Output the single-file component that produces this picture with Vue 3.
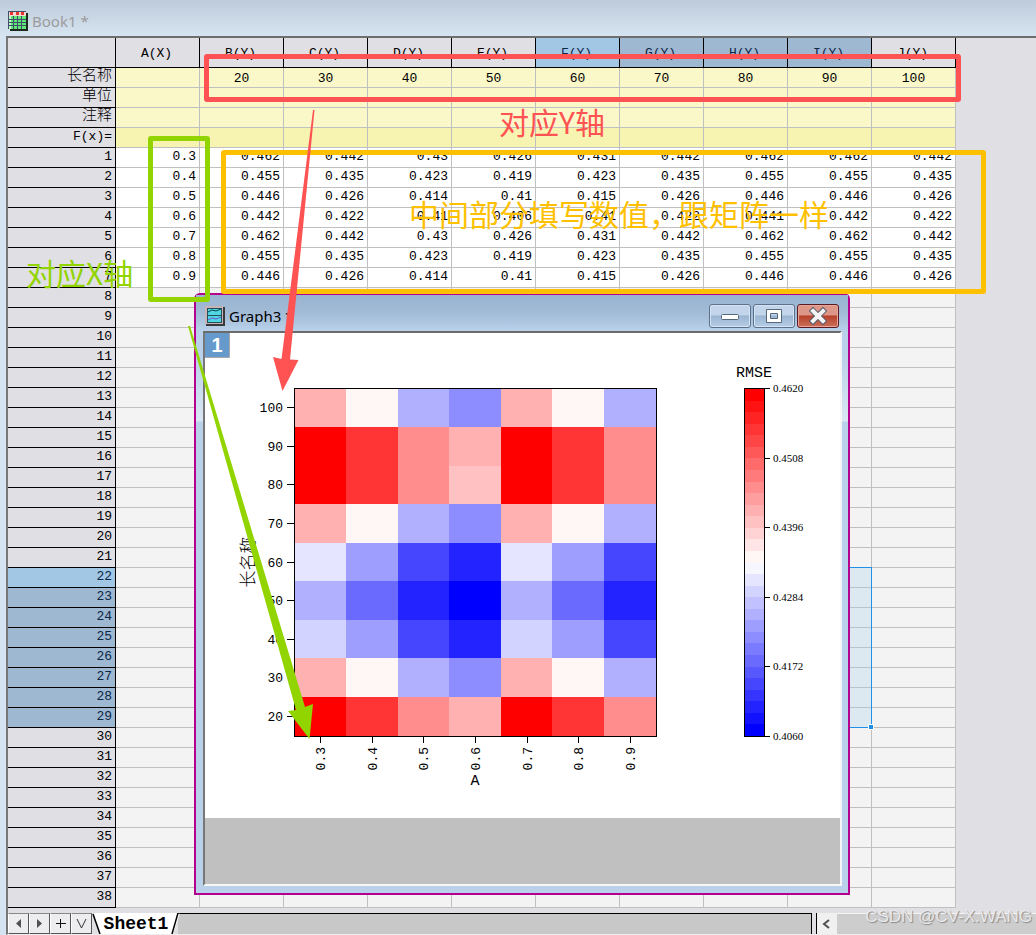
<script setup>
const columns = ['A(X)', 'B(Y)', 'C(Y)', 'D(Y)', 'E(Y)', 'F(Y)', 'G(Y)', 'H(Y)', 'I(Y)', 'J(Y)']
const columnState = ['', '', '', '', '', 'active', 'picked', 'picked', 'picked', '']
const longNames = ['', 20, 30, 40, 50, 60, 70, 80, 90, 100]
const data = [
  [0.3, 0.462, 0.442, 0.43, 0.426, 0.431, 0.442, 0.462, 0.462, 0.442],
  [0.4, 0.455, 0.435, 0.423, 0.419, 0.423, 0.435, 0.455, 0.455, 0.435],
  [0.5, 0.446, 0.426, 0.414, 0.41, 0.415, 0.426, 0.446, 0.446, 0.426],
  [0.6, 0.442, 0.422, 0.41, 0.406, 0.41, 0.422, 0.441, 0.442, 0.422],
  [0.7, 0.462, 0.442, 0.43, 0.426, 0.431, 0.442, 0.462, 0.462, 0.442],
  [0.8, 0.455, 0.435, 0.423, 0.419, 0.423, 0.435, 0.455, 0.455, 0.435],
  [0.9, 0.446, 0.426, 0.414, 0.41, 0.415, 0.426, 0.446, 0.446, 0.426]
]
const infoRows = ['单位', '注释', 'F(x)=']
const rowCount = 38

const rowState = (n) => (n === 22 ? 'active' : n > 22 && n < 30 ? 'picked' : '')

const LEVELS = 30
const MIN = 0.406
const MAX = 0.462

function levelColor(i) {
  if (i >= LEVELS / 2) {
    const v = Math.round((255 * (LEVELS - 1 - i)) / 14.5)
    return `rgb(255,${v},${v})`
  }
  const v = Math.round((255 * i) / 14.5)
  return `rgb(${v},${v},255)`
}

function valueColor(v) {
  const i = Math.floor(((v - MIN) / (MAX - MIN)) * LEVELS + 0.001)
  return levelColor(Math.min(LEVELS - 1, Math.max(0, i)))
}

const plot = { x: 90, y: 56, w: 361, h: 347 }
const edgeX = (i) => Math.floor(plot.x + (plot.w * i) / 7)
const edgeY = (j) => Math.floor(plot.y + (plot.h * j) / 9)

const cells = []
data.forEach((row, i) => {
  for (let k = 1; k <= 9; k++) {
    const j = 9 - k
    cells.push({
      key: `${i}-${k}`,
      x: edgeX(i),
      y: edgeY(j),
      w: edgeX(i + 1) - edgeX(i),
      h: edgeY(j + 1) - edgeY(j),
      fill: valueColor(row[k])
    })
  }
})
const yTicks = Array.from({ length: 9 }, (_, j) => ({
  label: 100 - j * 10,
  y: Math.round(plot.y + (plot.h * (2 * j + 1)) / 18) - 1
}))
const xTicks = data.map((row, i) => ({
  label: row[0],
  x: Math.floor(plot.x + (plot.w * (2 * i + 1)) / 14)
}))
const barEdge = (i) => Math.round(56 + (347 * i) / LEVELS)
const bar = Array.from({ length: LEVELS }, (_, i) => ({
  y: barEdge(i),
  h: barEdge(i + 1) - barEdge(i),
  fill: levelColor(LEVELS - 1 - i)
}))
const barTicks = ['0.4620', '0.4508', '0.4396', '0.4284', '0.4172', '0.4060'].map((label, i) => ({
  label,
  y: Math.round(55 + (348 * i) / 5)
}))
</script>

<template>
  <main class="book">
    <header class="book-title">
      <svg class="book-icon" width="20" height="20" viewBox="0 0 20 20" aria-hidden="true">
        <path d="M2 2h18v18H2z" fill="#1c2a1c" />
        <path d="M0 0h18v18H0z" fill="#3f4f6a" />
        <path d="M1 1h17v4H1z" fill="#f6d6d0" />
        <path d="M2 1h3v3H2zM8 1h3v3H8zM13 1h3v3h-3z" fill="#e8342c" />
        <path
          d="M1 5h4v3H1zM6 5h3v3H6zM10 5h3v3h-3zM14 5h4v3h-4zM1 9h4v2H1zM6 9h3v2H6zM10 9h3v2h-3zM14 9h4v2h-4zM1 12h4v2H1zM6 12h3v2H6zM10 12h3v2h-3zM14 12h4v2h-4zM1 15h4v3H1zM6 15h3v3H6zM10 15h3v3h-3zM14 15h4v3h-4z"
          fill="#5fe878"
        />
        <path d="M1 5h2v3H1zM1 9h2v2H1zM1 12h2v2H1zM1 15h2v3H1z" fill="#c4f5ca" />
      </svg>
      <span>Book1 *</span>
    </header>

    <section class="sheet-area">
      <table class="sheet">
        <colgroup>
          <col class="col-head" />
          <col v-for="c in columns" :key="c" class="col-data" />
        </colgroup>
        <thead>
          <tr>
            <th></th>
            <th v-for="(c, i) in columns" :key="c" scope="col" :class="columnState[i]">{{ c }}</th>
          </tr>
        </thead>
        <tbody>
          <tr class="info names">
            <th scope="row">长名称</th>
            <td v-for="(n, i) in longNames" :key="i">{{ n }}</td>
          </tr>
          <tr v-for="label in infoRows" :key="label" class="info" :class="{ formula: label === 'F(x)=' }">
            <th scope="row">{{ label }}</th>
            <td v-for="c in columns" :key="c"></td>
          </tr>
          <tr v-for="n in rowCount" :key="n" :class="{ blank: n > data.length }">
            <th scope="row" :class="rowState(n)">{{ n }}</th>
            <td v-for="(c, i) in columns" :key="c">{{ n <= data.length ? data[n - 1][i] : '' }}</td>
          </tr>
        </tbody>
      </table>
      <div class="selection"><i></i></div>
    </section>

    <footer class="tabs">
      <button type="button" class="nav" aria-label="Previous sheet">
        <svg width="20" height="20" viewBox="0 0 20 20"><path d="M12 5v9l-5-4.500z" fill="#505050" /></svg>
      </button>
      <button type="button" class="nav" aria-label="Next sheet">
        <svg width="20" height="20" viewBox="0 0 20 20"><path d="M7 5v9l5-4.500z" fill="#505050" /></svg>
      </button>
      <button type="button" class="nav" aria-label="Add sheet">
        <svg width="20" height="20" viewBox="0 0 20 20"><path d="M5 9.500h10M9.500 5v9" stroke="#111" fill="none" /></svg>
      </button>
      <button type="button" class="nav" aria-label="Sheet list">
        <svg width="20" height="20" viewBox="0 0 20 20"><path d="M5 5l4.500 9L14 5" stroke="#333" fill="none" /></svg>
      </button>
      <button type="button" class="tab">
        <svg width="88" height="21" viewBox="0 0 88 21" aria-hidden="true">
          <path d="M1 0h87l-7 21H8z" fill="#fff" />
          <path d="M1 1l7 20M88 0h-2l-6 21" stroke="#000" stroke-width="1.500" fill="none" />
        </svg>
        <span>Sheet1</span>
      </button>
      <div class="strip"></div>
      <button type="button" class="scroll-left" aria-label="Scroll left">
        <svg width="20" height="20" viewBox="0 0 20 20"><path d="M12 6l-5 4 5 4" stroke="#505050" stroke-width="2" fill="none" /></svg>
      </button>
      <div class="scroll-track"></div>
    </footer>

    <section class="graph">
      <header class="graph-title">
        <svg width="20" height="20" viewBox="0 0 20 20" aria-hidden="true">
          <path d="M1 1h19v19H1z" fill="#3a3a3a" />
          <path d="M0 0h18v18H0z" fill="#c8b4b4" />
          <path d="M2 2h15v15H2z" fill="#23505c" />
          <path d="M3 3h13v6H3zM3 10h13v6H3z" fill="#4fd6e0" />
          <path d="M3 6l4-2 4 1 5-2" stroke="#0d4250" fill="none" />
          <path d="M3 14l4-2 4 1 5-2" stroke="#6a57d8" fill="none" />
        </svg>
        <span class="graph-name">Graph3 *</span>
        <button type="button" class="win" aria-label="Minimize">
          <svg width="40" height="22" viewBox="0 0 40 22"><rect x="11.500" y="9.500" width="17" height="5" rx="1" fill="#fff" stroke="#57677a" /></svg>
        </button>
        <button type="button" class="win" aria-label="Maximize">
          <svg width="40" height="22" viewBox="0 0 40 22">
            <path d="M12.500 4.500h15v13h-15zM16.500 8.500v5h7v-5z" fill="#fff" fill-rule="evenodd" stroke="#57677a" />
          </svg>
        </button>
        <button type="button" class="win close" aria-label="Close">
          <svg width="40" height="22" viewBox="0 0 40 22">
            <path d="M15 6l10 10M25 6L15 16" stroke="#57596c" stroke-width="6" stroke-linecap="square" />
            <path d="M15 6l10 10M25 6L15 16" stroke="#f4f4f4" stroke-width="4" stroke-linecap="square" />
          </svg>
        </button>
      </header>
      <div class="graph-body">
        <svg class="chart" width="635" height="485" viewBox="0 0 635 485" role="img" aria-label="RMSE">
          <rect x="0" y="0" width="24" height="24" fill="#6699cc" />
          <path d="M0 24.500h24.500V0" stroke="#a8a8a8" fill="none" />
          <text x="12" y="19" class="layer">1</text>

          <g shape-rendering="crispEdges">
            <rect v-for="c in cells" :key="c.key" :x="c.x" :y="c.y" :width="c.w" :height="c.h" :fill="c.fill" />
            <rect x="89.500" y="55.500" width="362" height="348" fill="none" stroke="#000" />
            <path v-for="t in yTicks" :key="t.label" :d="`M82 ${t.y + 0.5}h7`" stroke="#000" />
            <path v-for="t in xTicks" :key="t.label" :d="`M${t.x + 0.5} 404v6`" stroke="#000" />
            <rect v-for="b in bar" :key="b.y" x="540" :y="b.y" width="20" :height="b.h" :fill="b.fill" />
            <rect x="539.500" y="55.500" width="20" height="348" fill="none" stroke="#000" />
            <path v-for="t in barTicks" :key="t.label" :d="`M560 ${t.y + 0.5}h5`" stroke="#000" />
          </g>

          <text v-for="t in yTicks" :key="t.label" x="78" :y="t.y + 5" class="tick end">{{ t.label }}</text>
          <text
            v-for="t in xTicks"
            :key="t.label"
            class="tick end"
            :transform="`translate(${t.x + 5} 414) rotate(-90)`"
          >{{ t.label }}</text>
          <text x="270" y="452" class="axis">A</text>
          <text class="axis cjk" transform="translate(49 229) rotate(-90)">长名称</text>
          <text x="549" y="44" class="axis">RMSE</text>
          <text v-for="t in barTicks" :key="t.label" x="568" :y="t.y + 4" class="small">{{ t.label }}</text>
        </svg>
      </div>
    </section>

    <div class="mark mark-y"></div>
    <div class="mark mark-x"></div>
    <div class="mark mark-z"></div>
    <p class="note note-y">对应Y轴</p>
    <p class="note note-x">对应X轴</p>
    <p class="note note-z">中间部分填写数值，跟矩阵一样</p>
    <svg class="arrows" width="400" height="760" viewBox="0 0 400 760" aria-hidden="true">
      <path d="M313 110h1.500L290 359.500l8.500.5-16 31-9.500-34 8.500 2z" fill="#ff5252" />
      <path d="M188 326h2L305 707l8-3-3.500 35L288 711l8-1z" fill="#92d400" />
    </svg>
    <p class="credit">CSDN @CV-X.WANG</p>
  </main>
</template>

<style>
body {
  margin: 0;
}
</style>

<style scoped>
.book {
  position: relative;
  display: flex;
  flex-direction: column;
  min-height: 100vh;
  box-sizing: border-box;
  padding-left: 6px;
  overflow: hidden;
  background: #d6e3f0;
  font-family: "Liberation Mono", "Noto Sans CJK SC", monospace;
  font-size: 13px;
  color: #000;
}
.book-title {
  display: flex;
  align-items: center;
  gap: 4px;
  height: 36px;
  box-sizing: border-box;
  padding: 6px 2px 0;
  margin-left: -6px;
  padding-left: 8px;
  background: linear-gradient(#becbda, #d6e4f1);
  font: 15px "Noto Sans", "Open Sans", sans-serif;
  color: #9c9c9c;
}
.book-icon {
  flex: none;
}
.sheet-area {
  position: relative;
  flex: 1;
  border-top: 2px solid #6e6e6e;
  border-left: 2px solid #777;
  padding-bottom: 5px;
  background: #e0dfe4;
}
.sheet {
  table-layout: fixed;
  width: 948px;
  border-collapse: separate;
  border-spacing: 0;
}
.col-head {
  width: 108px;
}
.col-data {
  width: 84px;
}
.sheet th,
.sheet td {
  box-sizing: border-box;
  height: 20px;
  padding: 0 3px 2px;
  line-height: 17px;
  font-weight: 400;
  text-align: right;
  vertical-align: middle;
  white-space: nowrap;
  border-right: 1px solid #c0c0c0;
  border-bottom: 1px solid #c0c0c0;
  background: #fff;
}
.sheet th {
  border-color: #000;
  background: #e0dfe4;
}
.sheet .info th {
  font-size: 15px;
  font-weight: 300;
  line-height: 16px;
}
.sheet .formula th {
  font-size: 13px;
}
.sheet thead th {
  height: 30px;
  padding: 1px 2px 0 0;
  text-align: center;
}
.sheet .info td {
  background: #faf8c8;
}
.sheet .formula td {
  background: #f6f4b0;
}
.sheet .names td {
  padding: 1px 0 0;
  text-align: center;
}
.sheet .blank td {
  background: #f3f3f3;
}
.sheet th.active {
  background: #a2c7e5;
  color: #0b2746;
}
.sheet th.picked {
  background: #9fb8d2;
  color: #0b2746;
}
.selection {
  position: absolute;
  left: 527px;
  top: 529px;
  width: 335px;
  height: 159px;
  border: 1px solid #2090e8;
  background: rgba(160, 210, 235, 0.28);
  background-clip: padding-box;
}
.selection i {
  position: absolute;
  right: -3px;
  bottom: -3px;
  width: 4px;
  height: 4px;
  border: 1px solid #fff;
  background: #2090e8;
}
.tabs {
  display: flex;
  height: 22px;
  box-sizing: border-box;
  border-left: 2px solid #777;
  border-bottom: 1px solid #eee;
  background: #e0dfe4;
}
.tabs button {
  flex: none;
  padding: 0;
  border: 0;
  font-family: inherit;
}
.tabs .nav {
  width: 21px;
  border: 1px solid #555;
  border-left-color: #fff;
  border-top-color: #888;
  background: #ededf0;
}
.nav svg,
.scroll-left svg,
.win svg {
  display: block;
}
.tabs .tab {
  display: grid;
  margin-right: -2px;
  z-index: 1;
  background: none;
}
.tab svg,
.tab span {
  grid-area: 1 / 1;
}
.tab span {
  place-self: center;
  font-size: 18px;
  line-height: 20px;
  font-weight: 700;
}
.tab svg {
  display: block;
}
.strip {
  flex: 1;
  border-top: 1px solid #000;
  border-right: 1px solid #000;
  background: #c8c8c8;
}
.tabs .scroll-left {
  width: 21px;
  margin-left: 4px;
  border-left: 1px solid #000;
  background: #f0f0f0;
}
.scroll-track {
  width: 199px;
  border-top: 1px solid #f4f4f4;
  box-sizing: border-box;
  background: #cdcdcd;
}
.graph {
  position: absolute;
  left: 194px;
  top: 293px;
  border: 2px solid #b4008c;
  border-radius: 6px 6px 0 0;
  padding: 0 6px 7px 7px;
  background: linear-gradient(#b9d1ea 60px, #dae6f3 126px, #b9d1ea 127px);
}
.graph-title {
  display: flex;
  align-items: center;
  gap: 2px;
  height: 36px;
  box-sizing: border-box;
  margin: 0 -6px 0 -7px;
  padding: 6px 9px 0;
  background: linear-gradient(#99b4d1, #a2bbd6 50%, #b9d1ea);
  font: 15px "Noto Sans", "Open Sans", sans-serif;
}
.graph-name {
  flex: 1;
  padding-left: 2px;
}
.win {
  width: 42px;
  height: 24px;
  padding: 0;
  border: 1px solid #5c718c;
  border-radius: 3px;
  box-shadow: inset 0 0 0 1px #d5e3f2;
  background: linear-gradient(#c2d5ea 45%, #9ab5d3 50%, #b6cde6);
}
.win.close {
  border-color: #5b1a22;
  box-shadow: inset 0 0 0 1px #e8a69b;
  background: linear-gradient(#dc9789 45%, #b7412b 50%, #c9705a);
}
.graph-body {
  border: 2px solid;
  border-color: #6b6b6b #f6f6f6 #f6f6f6 #777;
  padding-bottom: 66px;
  background: #c0c0c0;
}
.chart {
  display: block;
  background: #fff;
}
.chart text {
  font-family: "Liberation Mono", "Noto Sans CJK SC", monospace;
}
.chart .tick {
  font-size: 13px;
}
.chart .end {
  text-anchor: end;
}
.chart .axis {
  font-size: 15px;
  text-anchor: middle;
}
.chart .cjk {
  font-size: 17px;
  font-weight: 300;
}
.chart .small {
  font-family: "Liberation Serif", serif;
  font-size: 11px;
}
.chart .layer {
  font: 700 20px "Liberation Sans", sans-serif;
  fill: #fff;
  text-anchor: middle;
}
.mark {
  position: absolute;
  box-sizing: border-box;
  border: 5px solid;
  border-radius: 3px;
}
.mark-y {
  left: 204px;
  top: 54px;
  width: 757px;
  height: 48px;
  border-color: #ff5252;
}
.mark-x {
  left: 148px;
  top: 136px;
  width: 62px;
  height: 166px;
  border-color: #92d400;
}
.mark-z {
  left: 221px;
  top: 150px;
  width: 765px;
  height: 144px;
  border-color: #ffc000;
}
.note {
  position: absolute;
  margin: 0;
  font: 400 30px/40px "Noto Sans CJK SC", sans-serif;
  white-space: nowrap;
}
.note-y {
  left: 499px;
  top: 101px;
  color: #ff5252;
}
.note-x {
  left: 26px;
  top: 252px;
  color: #92d400;
}
.note-z {
  left: 409px;
  top: 193px;
  color: #ffc000;
}
.arrows {
  position: absolute;
  left: 0;
  top: 0;
  pointer-events: none;
}
.credit {
  position: absolute;
  right: 4px;
  bottom: 8px;
  margin: 0;
  font: 17px/20px "Liberation Sans", sans-serif;
  color: #e8e8ea;
  text-shadow: 1px 1px 1px #888;
}
</style>
